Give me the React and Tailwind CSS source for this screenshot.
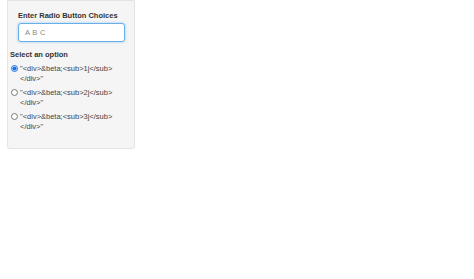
import React, { useState } from 'react';

const options = [
  '"<div>&beta;<sub>1j</sub> </div>"',
  '"<div>&beta;<sub>2j</sub> </div>"',
  '"<div>&beta;<sub>3j</sub> </div>"',
];

const App = () => {
  const [selected, setSelected] = useState(0);

  return (
    <div className="w-[474px] h-[279px] bg-white font-['Liberation_Sans',Arial,sans-serif] text-[#333]">
      <div className="ml-[7px] w-[128px] h-[149px] bg-[#f5f5f5] border border-[#e3e3e3] rounded-b-[3px] pt-[10px]">
        {/* Choices input */}
        <div className="pl-[10px] pr-[9px]">
          <div className="text-[7.5px] font-bold leading-[9px] mb-[3px]">Enter Radio Button Choices</div>
          <div className="h-[19px] bg-white border border-[#66afe9] rounded-[3px] shadow-[0_0_3px_rgba(102,175,233,0.6)] flex items-center px-[6px]">
            <span className="text-[7.5px] text-[#888] tracking-[0.3px]">A B C</span>
          </div>
        </div>

        {/* Radio options */}
        <div className="pl-[2px] pt-[8px]">
          <div className="text-[7.5px] font-bold leading-[9px] mb-[5px]">Select an option</div>
          <div className="flex flex-col gap-[4px]">
            {options.map((opt, i) => (
              <label key={i} className="flex items-start gap-[2px] cursor-pointer">
                <input
                  type="radio"
                  name="opt"
                  checked={selected === i}
                  onChange={() => setSelected(i)}
                  className="w-[7px] h-[7px] mt-[1px] ml-[1px] accent-[#1a73e8] shrink-0"
                />
                <span className="text-[7.5px] leading-[10px] w-[100px] break-words text-[#444]">{opt}</span>
              </label>
            ))}
          </div>
        </div>
      </div>
    </div>
  );
};

export default App;
